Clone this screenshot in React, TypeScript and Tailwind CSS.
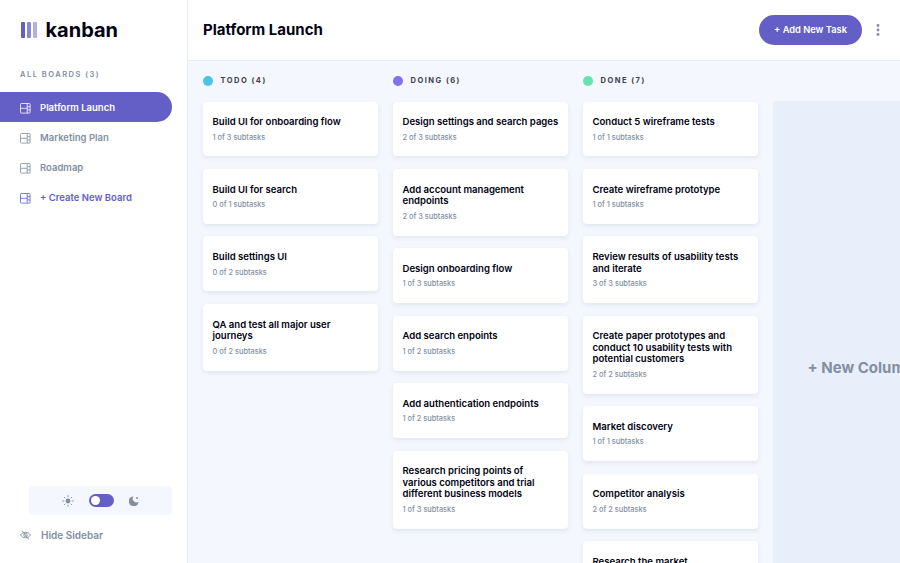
import React from "react";

const BoardIcon = ({ className = "" }: { className?: string }) => (
  <svg width="11" height="11" viewBox="0 0 11 11" fill="none" stroke="currentColor" strokeWidth="0.8" className={className}>
    <rect x="0.5" y="0.5" width="9.6" height="9.6" rx="0.8" />
    <path d="M0.5 5.3H7.2M7.2 0.5V10.1M7.2 3.7H10.1M7.2 6.9H10.1" />
  </svg>
);

const columns = [
  {
    name: "TODO (4)",
    dot: "bg-[#49c4e5]",
    cards: [
      ["Build UI for onboarding flow", "1 of 3 subtasks"],
      ["Build UI for search", "0 of 1 subtasks"],
      ["Build settings UI", "0 of 2 subtasks"],
      ["QA and test all major user journeys", "0 of 2 subtasks"],
    ],
  },
  {
    name: "DOING (6)",
    dot: "bg-[#8471f2]",
    cards: [
      ["Design settings and search pages", "2 of 3 subtasks"],
      ["Add account management endpoints", "2 of 3 subtasks"],
      ["Design onboarding flow", "1 of 3 subtasks"],
      ["Add search enpoints", "1 of 2 subtasks"],
      ["Add authentication endpoints", "1 of 2 subtasks"],
      ["Research pricing points of various competitors and trial different business models", "1 of 3 subtasks"],
    ],
  },
  {
    name: "DONE (7)",
    dot: "bg-[#67e2ae]",
    cards: [
      ["Conduct 5 wireframe tests", "1 of 1 subtasks"],
      ["Create wireframe prototype", "1 of 1 subtasks"],
      ["Review results of usability tests and iterate", "3 of 3 subtasks"],
      ["Create paper prototypes and conduct 10 usability tests with potential customers", "2 of 2 subtasks"],
      ["Market discovery", "1 of 1 subtasks"],
      ["Competitor analysis", "2 of 2 subtasks"],
      ["Research the market", "1 of 2 subtasks"],
    ],
  },
];

export default function App() {
  return (
    <div className="flex h-[563px] w-[900px] overflow-hidden bg-[#f4f7fd] font-['Inter','Liberation_Sans',sans-serif]">
      <aside className="flex w-[188px] shrink-0 flex-col border-r border-[#e4ebfa] bg-white">
        <div className="flex h-[60px] items-center gap-[9px] pl-[21px]">
          <div className="flex gap-[2.5px]">
            <span className="h-[16px] w-[3.5px] rounded-[1px] bg-[#635fc7]" />
            <span className="h-[16px] w-[3.5px] rounded-[1px] bg-[#635fc7]/75" />
            <span className="h-[16px] w-[3.5px] rounded-[1px] bg-[#635fc7]/50" />
          </div>
          <span className="text-[20px] leading-none font-bold text-[#000112]">kanban</span>
        </div>
        <p className="mt-[10px] pl-[20px] text-[7.5px] leading-[10px] font-semibold tracking-[1.5px] text-[#828fa3]">ALL BOARDS (3)</p>
        <nav className="mt-[12px] flex flex-col text-[9.5px] font-semibold text-[#828fa3]">
          <div className="flex h-[30px] w-[172px] items-center gap-[9px] rounded-r-full bg-[#635fc7] pt-[2px] pl-[20px] text-white">
            <BoardIcon />
            Platform Launch
          </div>
          <div className="flex h-[30px] items-center gap-[9px] pt-[2px] pl-[20px]">
            <BoardIcon />
            Marketing Plan
          </div>
          <div className="flex h-[30px] items-center gap-[9px] pt-[2px] pl-[20px]">
            <BoardIcon />
            Roadmap
          </div>
          <div className="flex h-[30px] items-center gap-[9px] pt-[2px] pl-[20px] text-[#635fc7]">
            <BoardIcon />
            + Create New Board
          </div>
        </nav>
        <div className="mt-auto ml-[29px] flex h-[29px] w-[143px] items-center justify-center gap-[15px] rounded-[4px] bg-[#f4f7fd]">
          <svg width="12" height="12" viewBox="0 0 12 12" fill="none" stroke="#828fa3" strokeWidth="0.9" strokeLinecap="round">
            <circle cx="6" cy="6" r="2.4" fill="#828fa3" stroke="none" />
            <path d="M6 .6v1.2M6 10.2v1.2M.6 6h1.2M10.2 6h1.2M2.2 2.2l.8.8M9 9l.8.8M2.2 9.8l.8-.8M9 3l.8-.8" />
          </svg>
          <div className="flex h-[12.5px] w-[25px] items-center rounded-full bg-[#635fc7] pl-[2px]">
            <span className="h-[9px] w-[9px] rounded-full bg-white" />
          </div>
          <svg width="10" height="10" viewBox="0 0 10 10" fill="#828fa3">
            <path d="M4.2.4A4.9 4.9 0 1 0 9.6 6 4.1 4.1 0 0 1 4.2.4Z" />
            <circle cx="8" cy="2" r="1" />
          </svg>
        </div>
        <div className="mt-[13px] mb-[21px] flex h-[14px] items-center gap-[10px] pl-[20px] text-[10px] font-semibold text-[#828fa3]">
          <svg width="11" height="10" viewBox="0 0 11 10" fill="none" stroke="#828fa3" strokeWidth="0.9">
            <path d="M.5 5C1.7 3.2 3.4 2.3 5.5 2.3S9.3 3.2 10.5 5C9.3 6.8 7.6 7.7 5.5 7.7S1.7 6.8.5 5Z" />
            <circle cx="5.5" cy="5" r="1.7" />
            <path d="M2 .6 8.8 9.4" />
          </svg>
          Hide Sidebar
        </div>
      </aside>
      <div className="flex min-w-0 flex-1 flex-col">
        <header className="flex h-[61px] shrink-0 items-center justify-between border-b border-[#e4ebfa] bg-white pr-[20px] pl-[15px]">
          <h1 className="pt-[1px] text-[15px] font-bold text-[#000112]">Platform Launch</h1>
          <div className="flex items-center gap-[14px]">
            <button className="h-[30px] w-[103px] rounded-full bg-[#635fc7] text-[9.3px] font-semibold text-white">+ Add New Task</button>
            <svg width="4" height="14" viewBox="0 0 4 14" fill="#828fa3">
              <circle cx="2" cy="2.5" r="1.4" />
              <circle cx="2" cy="7" r="1.4" />
              <circle cx="2" cy="11.5" r="1.4" />
            </svg>
          </div>
        </header>
        <main className="flex min-h-0 flex-1 gap-[15px] overflow-hidden pl-[14.5px]">
          {columns.map((col) => (
            <section key={col.name} className="w-[175px] shrink-0">
              <div className="flex h-[40.5px] items-center gap-[8px] pb-[1px]">
                <span className={`h-[10px] w-[10px] rounded-full ${col.dot}`} />
                <span className="text-[7.5px] font-bold tracking-[1.5px] text-[#3e3f4e]">{col.name}</span>
              </div>
              <div className="flex flex-col gap-[12.5px]">
                {col.cards.map(([title, sub]) => (
                  <article key={title} className="rounded-[4px] bg-white pt-[14.6px] pr-[8px] pb-[13.8px] pl-[10px] shadow-[0_2px_4px_rgba(54,78,126,0.1)]">
                    <h3 className="text-[9.55px] leading-[11.6px] font-semibold text-[#000112]">{title}</h3>
                    <p className="mt-[5px] text-[7.4px] leading-[10px] font-medium text-[#828fa3]">{sub}</p>
                  </article>
                ))}
              </div>
            </section>
          ))}
          <div className="mt-[40px] flex h-[600px] w-[175px] shrink-0 items-start justify-center rounded-[4px] bg-[#e9effa] pt-[256px] text-[15px] font-bold whitespace-nowrap text-[#828fa3]">
            <span className="ml-[35px] w-[140px]">+ New Column</span>
          </div>
        </main>
      </div>
    </div>
  );
}
